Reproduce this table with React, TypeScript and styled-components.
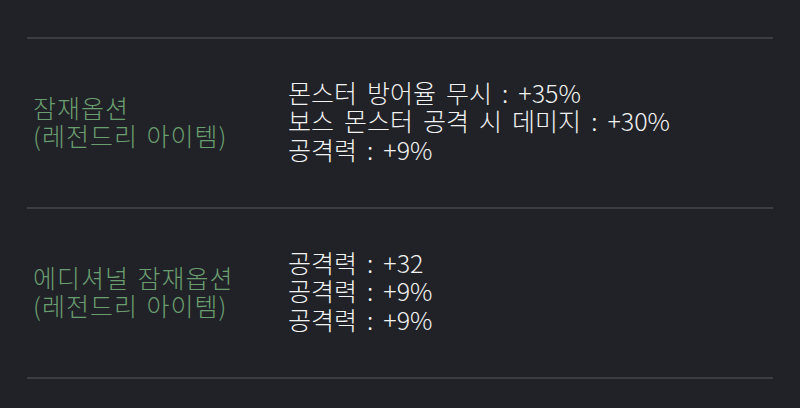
import styled, { createGlobalStyle } from "styled-components";

const GlobalStyle = createGlobalStyle`
	html, body {
		margin: 0;
		padding: 0;
		background: #212227;
	}
`;

type Row = { label: string[]; values: string[] };

const rows: Row[] = [
	{
		label: ["잠재옵션", "(레전드리 아이템)"],
		values: ["몬스터 방어율 무시 : +35%", "보스 몬스터 공격 시 데미지 : +30%", "공격력 : +9%"],
	},
	{
		label: ["에디셔널 잠재옵션", "(레전드리 아이템)"],
		values: ["공격력 : +32", "공격력 : +9%", "공격력 : +9%"],
	},
];

const App: React.FC = () => {
	return (
		<Page>
			<GlobalStyle />
			<Table>
				{rows.map((row, i) => (
					<OptionRow key={i}>
						<Label>
							{row.label.map((l) => (
								<Line key={l}>{l}</Line>
							))}
						</Label>
						<Values>
							{row.values.map((v, j) => (
								<Line key={j}>{v}</Line>
							))}
						</Values>
					</OptionRow>
				))}
			</Table>
		</Page>
	);
};

export default App;

const Page = styled.div`
	width: 800px;
	height: 408px;
	background: #212227;
	padding: 37px 27px 0;
	box-sizing: border-box;
	font-family: "Noto Sans CJK KR", "Noto Sans", sans-serif;
	font-weight: 300;
`;

const Table = styled.div`
	border-top: 2px solid #3c3d43;
`;

const OptionRow = styled.div`
	display: grid;
	grid-template-columns: 261px 1fr;
	align-items: center;
	height: 170px;
	padding-bottom: 5px;
	box-sizing: border-box;
	border-bottom: 2px solid #3c3d43;
`;

const Line = styled.div`
	white-space: nowrap;
`;

const Label = styled.div`
	padding-left: 6px;
	color: #6a9d70;
	font-size: 25px;
	line-height: 28px;
	letter-spacing: 1px;
	word-spacing: 2px;
`;

const Values = styled.div`
	color: #f2f2f2;
	font-size: 25px;
	line-height: 28.5px;
	word-spacing: 4.5px;
`;
